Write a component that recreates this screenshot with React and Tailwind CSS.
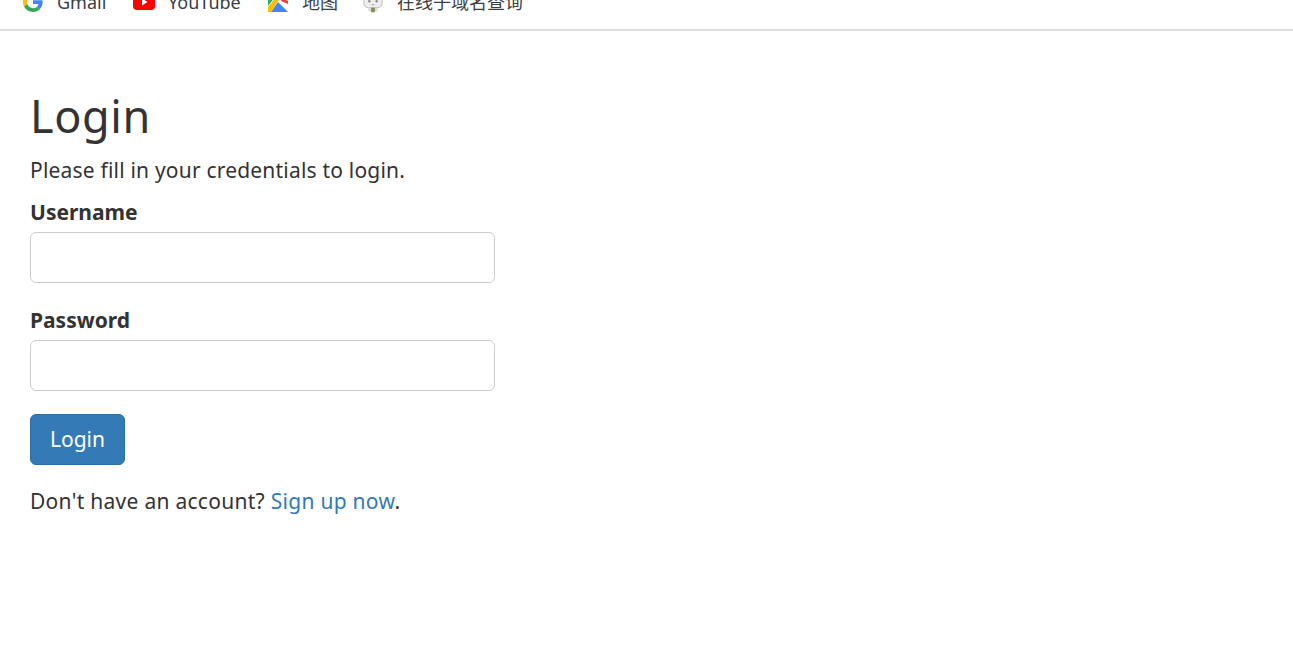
const F = { fontFamily: '"Noto Sans", "Noto Sans CJK SC", sans-serif' };

function Bookmark({ icon, label, width }) {
  return (
    <div className="flex items-center shrink-0" style={{ width }}>
      <span className="w-[22px] h-[22px] flex items-center justify-center shrink-0">{icon}</span>
      <span className="ml-[13px] text-[18px] leading-[22px] text-[#3c4043] whitespace-nowrap">{label}</span>
    </div>
  );
}

const G = (
  <svg viewBox="0 0 48 48" width="20" height="20">
    <path fill="#EA4335" d="M24 9.5c3.5 0 6.7 1.2 9.2 3.6l6.9-6.9C35.9 2.4 30.5 0 24 0 14.6 0 6.5 5.4 2.6 13.2l8 6.2C12.4 13.7 17.7 9.5 24 9.5z" />
    <path fill="#4285F4" d="M47 24.500c0-1.600-.1-3.100-.4-4.500H24v9h13c-.6 3-2.200 5.500-4.700 7.200l7.300 5.700C44 37.800 47 31.700 47 24.500z" />
    <path fill="#FBBC05" d="M10.600 28.600a14.500 14.500 0 0 1 0-9.200l-8-6.200a24 24 0 0 0 0 21.600l8-6.200z" />
    <path fill="#34A853" d="M24 48c6.500 0 11.900-2.100 15.900-5.800l-7.300-5.700c-2.200 1.400-5 2.300-8.600 2.300-6.300 0-11.600-4.200-13.400-10l-8 6.200C6.500 42.600 14.600 48 24 48z" />
  </svg>
);
const YT = (
  <svg viewBox="0 0 22 16" width="22" height="16">
    <rect width="22" height="16" rx="4" fill="#ff0000" />
    <path d="M9 4.500l5.500 3.500L9 11.500z" fill="#fff" />
  </svg>
);
const Maps = (
  <svg viewBox="0 0 20 20" width="20" height="20">
    <path d="M0 0h11L0 14z" fill="#34a853" />
    <path d="M11 0h9v9z" fill="#d9d4cf" />
    <path d="M14 6l6 3v3l-7-3z" fill="#ea4335" />
    <path d="M10 10l10 10H3z" fill="#4285f4" />
    <path d="M12 0h4L3 20H0v-5z" fill="#fbbc05" />
  </svg>
);
const Whois = (
  <svg viewBox="0 0 24 22" width="24" height="22" className="translate-y-[2px]">
    <rect x="2" y="1" width="20" height="14" rx="5" fill="#efeded" stroke="#bdb9b9" />
    <circle cx="8" cy="8" r="1.300" fill="#8a8a8a" />
    <circle cx="16" cy="8" r="1.300" fill="#8a8a8a" />
    <path d="M10 11l2 2 2-2z" fill="#c9a5a5" />
    <rect x="7" y="15" width="10" height="4" fill="#dcdcdc" />
    <rect x="10" y="15" width="4" height="5" fill="#7d8d55" />
  </svg>
);

export default function App() {
  return (
    <div className="min-h-[646px] bg-white text-[#333333]" style={F}>
      <div className="h-[31px] border-b-2 border-[#dedede] overflow-hidden">
        <div className="flex items-center h-[11px] pl-[22px] -translate-y-[4px]">
          <Bookmark icon={G} label="Gmail" width="111px" />
          <Bookmark icon={YT} label="YouTube" width="134px" />
          <Bookmark icon={Maps} label="地图" width="95px" />
          <Bookmark icon={Whois} label="在线子域名查询" width="165px" />
        </div>
      </div>
      <div className="w-[525px] p-[30px]">
        <h2 className="text-[45px] leading-[49.5px] font-normal tracking-[0.6px] mt-[30px] mb-[14px]">Login</h2>
        <p className="text-[21px] leading-[30px] tracking-[0.2px] mb-[12px]">Please fill in your credentials to login.</p>
        <div className="mb-[22px]">
          <label className="block text-[21px] leading-[30px] font-bold mb-[5px]">Username</label>
          <input className="block w-full h-[51px] border border-[#cccccc] rounded-[6px] bg-white" type="text" />
        </div>
        <div className="mb-[23px]">
          <label className="block text-[21px] leading-[30px] font-bold mb-[5px]">Password</label>
          <input className="block w-full h-[51px] border border-[#cccccc] rounded-[6px] bg-white" type="password" />
        </div>
        <button className="block h-[51px] w-[95px] pt-[2px] bg-[#337ab7] border border-[#2e6da4] rounded-[6px] text-white text-[21px]">Login</button>
        <p className="text-[21px] leading-[30px] tracking-[0.28px] mt-[21px]">
          Don't have an account? <a className="text-[#337ab7]" href="#">Sign up now</a>.
        </p>
      </div>
    </div>
  );
}
